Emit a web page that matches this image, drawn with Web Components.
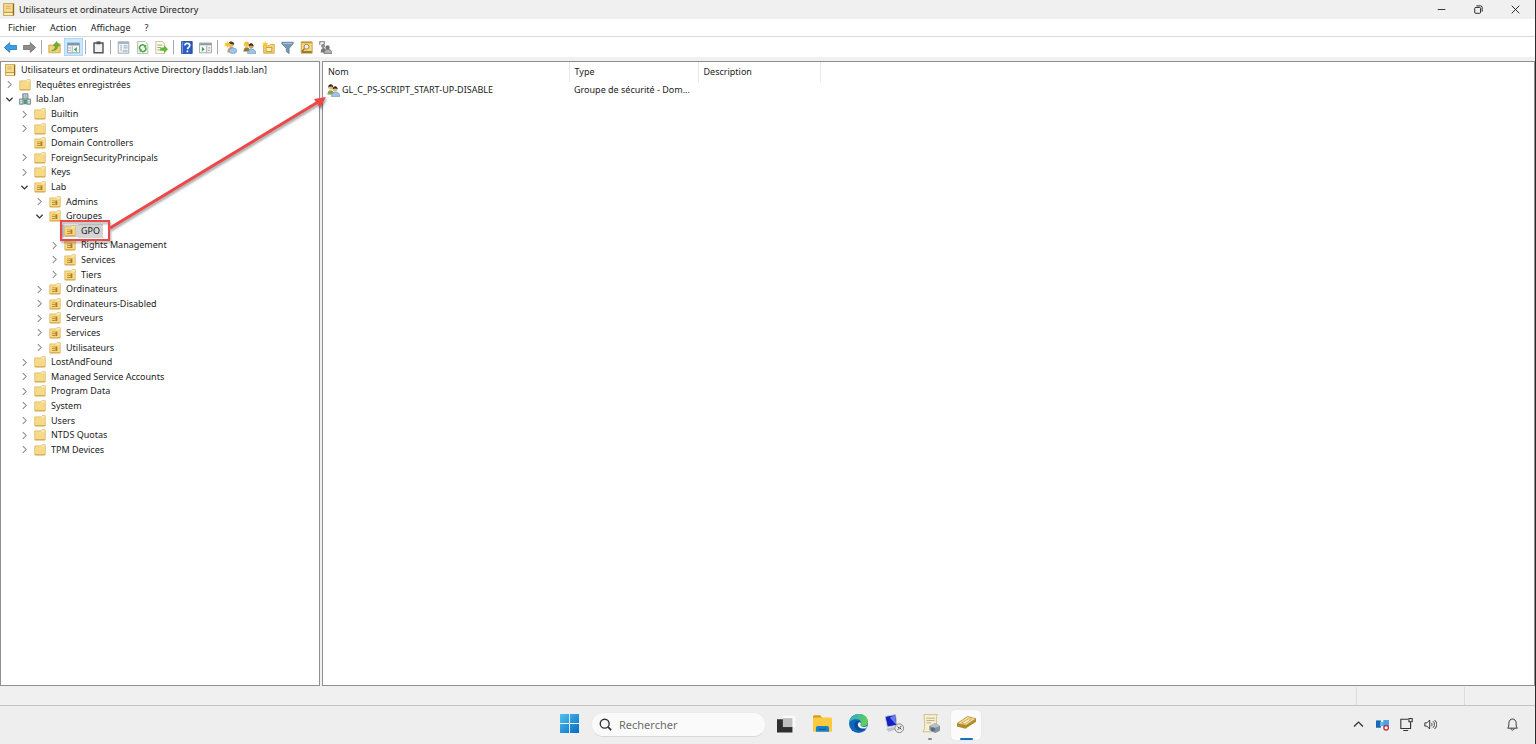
<!DOCTYPE html>
<html lang="fr">
<head>
<meta charset="utf-8">
<title>Utilisateurs et ordinateurs Active Directory</title>
<style>
  html, body { margin: 0; height: 100%; }
  body { font: 9px/14px "Noto Sans", "Open Sans", sans-serif; color: #1c1c1c; background: #f0f0f0; }
</style>
</head>
<body>
<ad-desktop></ad-desktop>

<script>
/* ---------- icons ---------- */
const folder = '<path d="M1 2.500 9 2.500 10.500 1H15V14.500H1Z" fill="#f6da88" stroke="#dcb45c"/><path d="M10 2.500h4.500" stroke="#fff3c4" stroke-width="1.500"/><path d="M1.500 14.500h13" stroke="#c9973a"/>';
const people = (a, b, c, d) => `<circle cx="4.500" cy="4" r="3" fill="${a}"/><path d="M.500 13c0-7 8-7 8 0z" fill="${b}"/><circle cx="10" cy="6.500" r="3" fill="${a}"/><path d="M7 6.500c0-5 6-5 6 0-1.500-1.300-4-1.300-6 0z" fill="#3a2a18"/><path d="M5.500 15.500c0-7.500 10.500-7.500 10.500 0z" fill="${c}" stroke="${d}" stroke-width=".6"/>`;
const star = '<path d="M4 0 5 2.800 8 2 6 4.300 8 6.500 5 6 4 9 3 6 0 6.500 2 4.300 0 2 3 2.800Z" fill="#fbc62c"/>';
const book = '<path d="M2 .5H14.500V15.500H2Z" fill="#f6dd8e" stroke="#b8933f"/><path d="M2.500 11.500H14" stroke="#a9812a"/><path d="M3 13.500H13.500" stroke="#fff8da" stroke-width="1.800"/><path d="M4.500 4h6M4.500 6.500h6" stroke="#cda651"/><path d="M14 1v14" stroke="#8a6a20" stroke-width="1.500"/>';
const ICONS = {
  book,
  folder,
  ou: folder + '<path d="M4 6h6.500v6H4z" fill="#c58f2b"/><path d="M4 7.500h4.500M4 10h4.500" stroke="#fbe7a8"/><path d="M10.500 6v6" stroke="#8a621b"/>',
  domain: '<path d="M5 1h7v7H5z" fill="#a9b7c0" stroke="#66757f"/><path d="M7 3h1M10 3h1M7 5.500h1M10 5.500h1" stroke="#eaf4fa"/><path d="M.500 8h5v7h-5zM10.500 8h5v7h-5z" fill="#b7c3ca" stroke="#66757f"/><path d="M6 8.500h4.500V15H6z" fill="#4f9b6e"/><path d="M2 10h2M2 12.500h2M12 10h2M12 12.500h2" stroke="#eaf4fa"/>',
  right: '<path d="m5 2 6 6-6 6" fill="none" stroke="#858585" stroke-width="1.800"/>',
  down: '<path d="m2.500 5 5.500 5.500L13.500 5" fill="none" stroke="#333" stroke-width="2.200"/>',
  group: people('#e5b57b', '#7fa24a', '#9cc4e6', '#4b7dab') + '<path d="M1.500 4c0-5 6.500-5 6 0-2-1.300-4-1.300-6 0z" fill="#3a2a18"/>',
  back: '<path d="M.500 8 7 2v3.500h8.500v5H7V14Z" fill="#3aa0e6" stroke="#1b76b8"/>',
  forward: '<path d="M15.500 8 9 2v3.500H.500v5H9V14Z" fill="#8d8d8d" stroke="#6e6e6e"/>',
  up: '<path d="M1 5h6l1-1.500h7v11H1z" fill="#f1d17a" stroke="#cda147"/><path d="M4.500 12c3-1 4.500-3 4.500-6H6.500L10.500.5l4 5.500H12c0 4-3 6-7.500 6z" fill="#6cb42f" stroke="#47851a" stroke-width=".5"/>',
  tree: '<path d="M.500 2.500h15v12H.500z" fill="#f4f6f8" stroke="#8094a3"/><path d="M1 4h14" stroke="#7c96ab" stroke-width="3"/><path d="M6.500 6v8M1 8.500h4M1 11.500h4" stroke="#9ba8b2"/><path d="M12 7.500v6L8.500 10.500z" fill="#3da63a"/>',
  clip: '<path d="M2.500 2.500h11v12h-11z" fill="#f2f2f2" stroke="#555" stroke-width="1.800"/><path d="M5.500.5h5v3.500h-5z" fill="#555"/>',
  props: '<path d="M1.500 1h13v14h-13z" fill="#f3f6f8" stroke="#8b9aa5"/><path d="M2 2.500h12" stroke="#8fa9bd" stroke-width="2"/><path d="M4 6h2M8 6h5M4 8.500h2M8 8.500h5M4 11h2" stroke="#7d93a4"/><path d="M7 11h6v2.500H7z" fill="#b4c7d4"/>',
  refresh: '<path d="M2 .500h9L14.500 4v11.500H2z" fill="#f8faf8" stroke="#a3aaa3"/><path d="M5 10.500A3.600 3.600 0 0 1 11 6.500M11.800 8A3.600 3.600 0 0 1 6 12" fill="none" stroke="#41a737" stroke-width="1.800"/><path d="M12.500 4v4H9zM4.500 14v-4H8z" fill="#41a737"/>',
  export: '<path d="M1 .500h8L12 4v11.500H1z" fill="#fffbe8" stroke="#bdb58f"/><path d="M3 5h6M3 8h4M3 11h5" stroke="#8b8b78"/><path d="M6.500 8H11V5l5 5-5 5v-3H6.500z" fill="#62b83b"/>',
  help: '<path d="M2 .500h13v15H2z" fill="#2c5fc0" stroke="#17408f"/><path d="M3 .500v15" stroke="#8eb0ee"/><path d="M6 5.500c0-3.500 6-3.500 6 0 0 2.200-2.800 2.300-2.800 4.800M9.200 11.800v2" fill="none" stroke="#fff" stroke-width="2"/>',
  pane: '<path d="M.500 2.500h15v12H.500z" fill="#f8f8f8" stroke="#8d979d"/><path d="M1 4h14" stroke="#8a99a5" stroke-width="2.500"/><path d="M9.500 6v8M11 8.500h3M11 11.500h3" stroke="#8d979d"/><path d="M3.500 7v6L7 10z" fill="#3da63a"/>',
  user: '<circle cx="8.500" cy="4.500" r="3.500" fill="#e7b878"/><path d="M5.500 3c1-4 7.500-3 7 1.500z" fill="#4d3820"/><path d="M4 14c0-9 10-9 10 0z" fill="#caa25a"/><ellipse cx="11" cy="12" rx="4.700" ry="3.500" fill="#9fc6ea" stroke="#5587b8" stroke-width=".6"/>' + star,
  addgroup: people('#c9a06b', '#8b7a3a', '#9cc4e6', '#4b7dab') + star,
  addou: '<path d="M2 5.500h7L10.500 4H15v11H2z" fill="#f3d27a" stroke="#cda147"/><path d="M5 8h7v5H5z" fill="#fff1b8" stroke="#c58f2b"/>' + star,
  filter: '<path d="M1 1.500h14v2L10 9v6.500L6.500 13V9L1 3.500z" fill="#7899b4" stroke="#4c6b85" stroke-width=".8"/><path d="M2.500 3h11" stroke="#b9cfe0"/>',
  find: '<path d="M1.500 1h13.500v14H1.500z" fill="#f3d678" stroke="#c19a3e"/><path d="M2 13.500h12.500" stroke="#8a6a20" stroke-width="2"/><path d="M2 2h12.500" stroke="#a67f2a"/><circle cx="8" cy="7" r="3" fill="#e4eef5" stroke="#98782e"/><path d="m5.500 9.500-3 3" stroke="#8a6a20" stroke-width="1.500"/>',
  addto: '<g transform="translate(0 1)"><circle cx="5" cy="5" r="2.500" fill="#8e8e8e"/><path d="M2 13c0-7 7-7 7 0z" fill="#777"/><circle cx="10.500" cy="7" r="2.700" fill="#777"/><path d="M6 14.500c0-7 10-7 10 0z" fill="#b3b3b3" stroke="#6d6d6d"/></g><path d="M1 4.500V1h5.500v3" fill="none" stroke="#777" stroke-width="1.300"/>',
  minimize: '<path d="M2.500 8h11" stroke="#222" stroke-width="1.300"/>',
  restore: '<rect x="2.500" y="5" width="8.500" height="8.500" rx="1.500" fill="none" stroke="#222" stroke-width="1.400"/><path d="M5 2.700h6a2.300 2.300 0 0 1 2.300 2.300V11" fill="none" stroke="#222" stroke-width="1.400"/>',
  close: '<path d="m2.500 2.500 11 11M13.500 2.500 2.500 13.500" stroke="#222" stroke-width="1.400"/>',
  windows: '<defs><linearGradient id="w" x1="0" y1="0" x2="1" y2="1"><stop stop-color="#4fc3ee"/><stop offset="1" stop-color="#0669c4"/></linearGradient></defs><path d="M0 0h7.600v7.600H0zM8.400 0H16v7.600H8.400zM0 8.400h7.600V16H0zM8.400 8.400H16V16H8.400z" fill="url(#w)"/>',
  search: '<circle cx="7" cy="7" r="5.500" fill="none" stroke="#333" stroke-width="1.700"/><path d="m11 11 4 4" stroke="#333" stroke-width="2.200"/>',
  taskview: '<path d="M5 1.500H15.500V11h-4V5.500h-6z" fill="#fafafa"/><path d="M0 4.500h5V11h8v4.500H0z" fill="#2e2e2e"/><path d="M5 3.500h8V11H5z" fill="#bdbdbd"/>',
  explorer: '<path d="M0 2.500C0 1.500.500 1 1.500 1H6l2 2.500H0z" fill="#d99a16"/><rect y="3" width="16" height="12" rx="1" fill="#fcc93f"/><path d="M2.500 15V11.500q0-1.500 1.500-1.500h8q1.500 0 1.500 1.500V15z" fill="#1881c9"/><path d="M5 13h6" stroke="#0b5d9c"/>',
  edge: '<defs><linearGradient id="e" x1="0" y1="0" x2="1" y2=".4"><stop stop-color="#2aa7e0"/><stop offset="1" stop-color="#62cf52"/></linearGradient></defs><circle cx="8" cy="8" r="8" fill="#0f66bd"/><path d="M0 8C0-2.500 16-2.500 16 6.500c0 4.500-6 4.500-6.300 2.500C11 7 9.500 4.500 6.500 4.500 3 4.500.500 6 0 8z" fill="url(#e)"/><path d="M4.500 9.500C4.500 6 8 5 9.300 7 7.500 9 9 13 14.500 11.800c-3 3.800-10 2.700-10-2.300z" fill="#0a4a98"/><path d="M7.500 8.500C8 6.500 9.500 6.500 10 8c-.8 1-.3 2.500 1.500 2.800 1.200.2 2.500 0 3.900-.8l-.9 2C10 13 7.200 11.500 7.500 8.500z" fill="#eef4fa"/>',
  rdp: '<path d="m0 2 9-1.500 1 9L2 11z" fill="#1420c0" stroke="#c9cdd6" stroke-width=".8"/><path d="m4 3 4.500 5L9.500 9 8.500 1z" fill="#6e7fe8"/><path d="m1 12.500 6-1.500 2 2-6 2z" fill="#bcc2c9"/><circle cx="12" cy="12" r="3.700" fill="#ececec" stroke="#777" stroke-width=".7"/><path d="m10.500 10.500 1.500 1.500-1.500 1.500M13.700 10 12.500 11.500l1.200 1.500" fill="none" stroke="#444" stroke-width=".8"/>',
  script: '<path d="M2.500.5h11.500c-1 1.200-1 2-1 4v10.500H1.500c1.500-1.500 1.500-3 1.500-7z" fill="#f7efcf" stroke="#c8b67b" stroke-width=".7"/><path d="M4.500 3.500h7M4.500 5.500h7M4.500 7.500h4" stroke="#b9ae88" stroke-width=".8"/><path d="m7 10 5-2.500 4 2.500v4l-4 2-5-2.500z" fill="#87919a"/><path d="m7 10 5-2.500 4 2.500-4 1.500z" fill="#b8c0c7"/><circle cx="10" cy="13" r="1.700" fill="#4d6f8d"/>',
  rule: '<path d="M0 8 9 2l7 2v2.500L7 12.500 0 10.500z" fill="#b28a2e"/><path d="M0 8 9 2l7 2-8.500 5.500z" fill="#f3dd90" stroke="#a9812a" stroke-width=".5"/><path d="m4 7.500 6-3.500 2 .6-5.500 3.600z" fill="#fffbe6" stroke="#a9812a" stroke-width=".5"/>',
  chevup: '<path d="m2.500 10.500 5.500-5.500 5.500 5.500" fill="none" stroke="#333" stroke-width="1.600"/>',
  netapp: '<path d="M0 3h6v9H0z" fill="#1667b5"/><path d="M5 5h5v5H5z" fill="#5bb9f0"/><path d="M9 2.500h7v8H9z" fill="#49a4e4"/><circle cx="12.500" cy="12" r="2.800" fill="#fff" stroke="#c4323e" stroke-width="1.700"/>',
  network: '<path d="M10 1.500H1v11.500h12V8M4 15.500h6" fill="none" stroke="#333" stroke-width="1.300"/><path d="M11 .700h4v4h-4zM13 4.500V10" fill="none" stroke="#333" stroke-width="1.300"/>',
  sound: '<path d="M1 6h2.500L7 2.500v11L3.500 10H1z" fill="none" stroke="#333" stroke-width="1.200"/><path d="M9 6c1.200 1 1.200 3 0 4M11 4c2.500 2.300 2.500 5.700 0 8M13 2.500c3.500 3 3.500 8 0 11" fill="none" stroke="#333" stroke-width="1.200"/>',
  bell: '<path d="M2 12.500c1.500-1.500 1.500-3 1.500-6C3.500-.5 12.500-.5 12.500 6.500c0 3 0 4.500 1.500 6z" fill="none" stroke="#333" stroke-width="1.200"/><path d="M6 13c.5 2.500 3.500 2.500 4 0" fill="none" stroke="#333" stroke-width="1.200"/>'
};

/* Base class: renders a style and a markup string into an open shadow root. */
class Part extends HTMLElement {
  connectedCallback() {
    if (this.shadowRoot) return;
    const t = document.createElement('template');
    t.innerHTML = `<style>*{box-sizing:border-box}button{font:inherit;color:inherit;background:none;border:0;padding:0;margin:0}${this.css()}</style>${this.html()}`;
    this.attachShadow({ mode: 'open' }).append(t.content.cloneNode(true));
  }
  css() { return ''; }
  html() { return ''; }
}
const define = (name, css, html) => customElements.define(name, class extends Part {
  css() { return css; }
  html() { return typeof html === 'function' ? html(this) : html; }
});

define('ui-icon',
  ':host{display:inline-flex;flex:none;width:var(--size,13px);height:var(--size,13px)} svg{width:100%;height:100%}',
  el => `<svg viewBox="0 0 16 16" aria-hidden="true">${ICONS[el.getAttribute('name')]}</svg>`);

define('title-bar', `
  :host{display:flex;align-items:center;height:19px;padding-left:2px;background:#f0f0f0}
  h1{font:inherit;margin:0 auto 0 4px}
  button{display:grid;place-items:center;width:37px;height:16px;--size:11px}
  button:last-child{margin-right:1px}`,
  `<ui-icon name="book"></ui-icon><h1><slot></slot></h1>
   <button aria-label="Réduire"><ui-icon name="minimize"></ui-icon></button>
   <button aria-label="Restaurer"><ui-icon name="restore"></ui-icon></button>
   <button aria-label="Fermer"><ui-icon name="close"></ui-icon></button>`);

define('menu-bar', `
  :host{display:flex;align-items:center;height:18px;padding-left:1px;background:#fff;border-bottom:1px solid #dadada}
  button{height:16px;padding:0 7px}`,
  `<button>Fichier</button><button>Action</button><button>Affichage</button><button>?</button>`);

define('tool-bar', `
  :host{display:flex;align-items:center;height:20px;padding-left:1px;background:#fff}
  button{display:grid;place-items:center;width:19px;height:18px;border:1px solid transparent}
  button[aria-pressed]{background:#cce8ff;border-color:#a9d8fb}
  i{width:1px;height:14px;margin:0 3px 0 2px;background:#a8a8a8}`,
  () => {
    const items = [['back', 'Précédent'], ['forward', 'Suivant'], 0, ['up', 'Dossier parent'], ['tree', 'Arborescence'], 0, ['clip', 'Couper'], 0,
      ['props', 'Propriétés'], ['refresh', 'Actualiser'], ['export', 'Exporter la liste'], 0, ['help', 'Aide'], ['pane', 'Volet Actions'], 0,
      ['user', 'Nouvel utilisateur'], ['addgroup', 'Nouveau groupe'], ['addou', 'Nouvelle unité d’organisation'], ['filter', 'Filtrer'], ['find', 'Rechercher un objet'], ['addto', 'Ajouter à un groupe']];
    return items.map(i => i ? `<button aria-label="${i[1]}"${i[0] === 'tree' ? ' aria-pressed="true"' : ''}><ui-icon name="${i[0]}"></ui-icon></button>` : '<i></i>').join('');
  });

define('tree-item', `
  :host{display:flex;align-items:center;min-height:0;padding-left:calc(1px + var(--depth) * 15px);white-space:nowrap}
  .twist{display:grid;place-items:center;width:15px;--size:9px}
  .pic{display:grid;place-items:center;width:16px}
  .label{padding:0 3px;line-height:14px}
  :host([aria-selected]) .label{background:#d4d4d4}
  :host([aria-selected]) .pic{background:#d4d4d4}`,
  el => {
    const s = el.getAttribute('state');
    return `${s === 'root' ? '' : `<span class="twist">${s ? `<ui-icon name="${s}"></ui-icon>` : ''}</span>`}
      <span class="pic"><ui-icon name="${el.getAttribute('icon')}"></ui-icon></span><span class="label"><slot></slot></span>`;
  });

/* Depth, twisty state, icon, label. */
const NODES = [
  [0, 'root', 'book', 'Utilisateurs et ordinateurs Active Directory [ladds1.lab.lan]'],
  [0, 'right', 'folder', 'Requêtes enregistrées'], [0, 'down', 'domain', 'lab.lan'],
  [1, 'right', 'folder', 'Builtin'], [1, 'right', 'folder', 'Computers'], [1, '', 'ou', 'Domain Controllers'],
  [1, 'right', 'folder', 'ForeignSecurityPrincipals'], [1, 'right', 'folder', 'Keys'], [1, 'down', 'ou', 'Lab'],
  [2, 'right', 'ou', 'Admins'], [2, 'down', 'ou', 'Groupes'],
  [3, '', 'ou', 'GPO'], [3, 'right', 'ou', 'Rights Management'], [3, 'right', 'ou', 'Services'], [3, 'right', 'ou', 'Tiers'],
  [2, 'right', 'ou', 'Ordinateurs'], [2, 'right', 'ou', 'Ordinateurs-Disabled'], [2, 'right', 'ou', 'Serveurs'],
  [2, 'right', 'ou', 'Services'], [2, 'right', 'ou', 'Utilisateurs'],
  [1, 'right', 'folder', 'LostAndFound'], [1, 'right', 'folder', 'Managed Service Accounts'], [1, 'right', 'folder', 'Program Data'],
  [1, 'right', 'folder', 'System'], [1, 'right', 'folder', 'Users'], [1, 'right', 'folder', 'NTDS Quotas'], [1, 'right', 'folder', 'TPM Devices']
];

define('tree-view', `
  :host{display:block;background:#fff;border:1px solid #8f8f8f;overflow:hidden}
  [role=tree]{display:grid;grid-auto-rows:1fr;height:394px;margin-top:1px}
  tree-item{--size:12px}`,
  () => `<div role="tree">${NODES.map(([d, s, i, t]) =>
    `<tree-item role="treeitem" style="--depth:${d}" aria-level="${d + 1}" state="${s}" icon="${i}"${t === 'GPO' ? ' aria-selected="true"' : ''}>${t}</tree-item>`).join('')}</div>`);

define('object-list', `
  :host{display:block;background:#fff;border:1px solid #8f8f8f}
  table{width:100%;border-collapse:collapse;table-layout:fixed}
  th,td{padding:0 5px;text-align:left;font-weight:400;white-space:nowrap;overflow:hidden;text-overflow:ellipsis}
  th{height:20px;border-right:1px solid #e8e8e8}
  th:last-child{border-right:0}
  td{height:16px}
  td:first-child{padding-left:4px}
  .name{display:flex;align-items:center;gap:2px}
  .a{width:246px}.b{width:129px}.c{width:122px}`,
  `<table><colgroup><col class="a"><col class="b"><col class="c"><col></colgroup>
    <thead><tr><th scope="col">Nom</th><th scope="col">Type</th><th scope="col">Description</th><th></th></tr></thead>
    <tbody><tr><td><span class="name"><ui-icon name="group"></ui-icon>GL_C_PS-SCRIPT_START-UP-DISABLE</span></td><td>Groupe de sécurité - Dom...</td><td></td><td></td></tr></tbody></table>`);

define('status-bar', `
  :host{display:flex;justify-content:flex-end;height:19px;background:#f0f0f0}
  span{border-left:1px solid #dcdcdc;margin-top:1px}
  .w{width:108px}.n{width:71px}`,
  `<span class="w"></span><span class="n"></span>`);

define('task-button', `
  :host{display:block}
  button{position:relative;display:grid;place-items:center;width:30px;height:30px;margin:0 3px;border-radius:4px;padding-bottom:2px;--size:19px}
  :host([active]) button{background:#fbfbfb;box-shadow:0 0 1px #c8c8c8}
  button::after{content:"";position:absolute;bottom:0;width:0;height:2px;border-radius:1px;background:#8a8a8a}
  :host([running]) button::after{width:4px}
  :host([active]) button::after{width:13px;background:#0a74c9}`,
  el => `<button aria-label="${el.getAttribute('label')}"><ui-icon name="${el.getAttribute('icon')}"></ui-icon></button>`);

define('search-box', `
  :host{display:block;margin:0 2px 0 4px}
  label{display:flex;align-items:center;gap:7px;width:175px;height:25px;padding:0 7px;border-radius:13px;background:#fafafa;border:1px solid #ececec;border-bottom-color:#d8d8d8;--size:13px}
  input{flex:1;min-width:0;border:0;outline:0;padding:0;background:none;font-family:inherit;font-size:11px;color:#333}
  input::placeholder{color:#6d6d6d;opacity:1}`,
  `<label><ui-icon name="search"></ui-icon><input type="text" placeholder="Rechercher" aria-label="Rechercher"></label>`);

define('task-bar', `
  :host{display:grid;grid-template-columns:1fr auto 1fr;align-items:center;height:39px;padding-bottom:1px;box-sizing:border-box;background:#eeeeee;border-top:1px solid #c4c4c4}
  .apps{display:flex;align-items:center;grid-column:2}
  .tray{display:flex;justify-content:flex-end;align-items:center;padding-right:11px}
  .tray button{display:grid;place-items:center;width:24px;height:24px;--size:13px}
  .quick{display:flex;margin-right:58px}`,
  `<div class="apps">
    <task-button label="Démarrer" icon="windows"></task-button><search-box></search-box>
    <task-button label="Vue des tâches" icon="taskview"></task-button>
    <task-button label="Explorateur de fichiers" icon="explorer"></task-button>
    <task-button label="Microsoft Edge" icon="edge"></task-button>
    <task-button label="Bureau à distance" icon="rdp"></task-button>
    <task-button label="Stratégies de groupe" icon="script" running></task-button>
    <task-button label="Active Directory" icon="rule" active></task-button>
  </div>
  <div class="tray"><div class="quick">
    <button aria-label="Icônes cachées"><ui-icon name="chevup"></ui-icon></button>
    <button aria-label="Session réseau"><ui-icon name="netapp"></ui-icon></button>
    <button aria-label="Réseau"><ui-icon name="network"></ui-icon></button>
    <button aria-label="Volume"><ui-icon name="sound"></ui-icon></button></div>
    <button aria-label="Notifications"><ui-icon name="bell"></ui-icon></button>
  </div>`);

/* Frame around the GPO node and the arrow to its group. */
define('callout-arrow', `
  :host{position:absolute;left:56px;top:31px;pointer-events:none}
  svg{display:block;overflow:visible;filter:drop-shadow(1px 2px 1px rgba(0,0,0,.35))}`,
  `<svg width="276" height="156" viewBox="0 0 276 156" aria-hidden="true">
    <rect x="5" y="133" width="48" height="19" fill="none" stroke="#ec484a" stroke-width="2"/>
    <path d="M54 140 262 14" stroke="#ec484a" stroke-width="3"/><path d="M270 9 264 20 258 11Z" fill="#ec484a"/></svg>`);

define('ad-desktop', `
  :host{display:flex;flex-direction:column;min-height:100vh;box-sizing:border-box;border-right:1px solid #2b2b2b}
  main{position:relative;flex:1;display:grid;grid-template-columns:320px 1fr;gap:2px;padding-top:4px}`,
  `<title-bar>Utilisateurs et ordinateurs Active Directory</title-bar>
   <menu-bar></menu-bar><tool-bar></tool-bar>
   <main><tree-view></tree-view><object-list></object-list><callout-arrow></callout-arrow></main>
   <status-bar></status-bar><task-bar></task-bar>`);
</script>
</body>
</html>
